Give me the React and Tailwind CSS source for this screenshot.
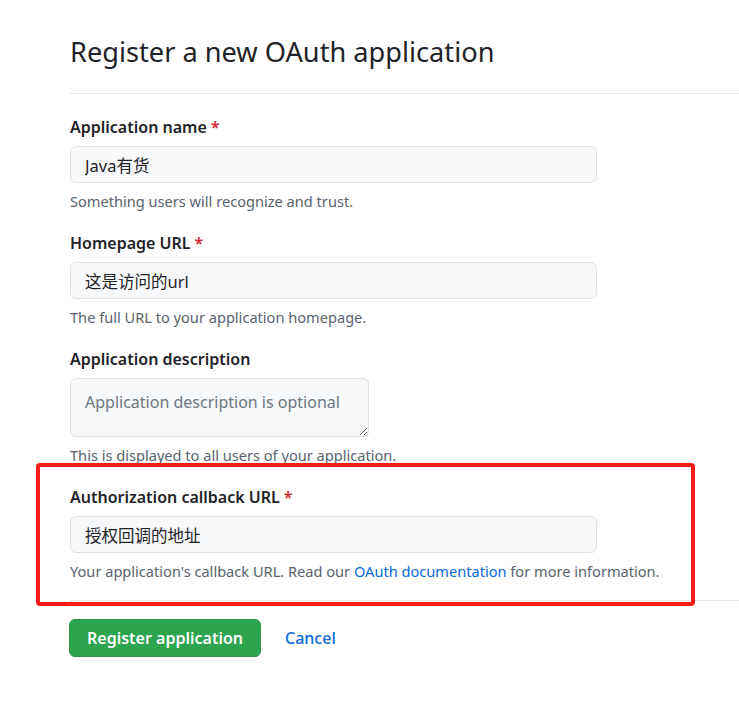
import React from "react";

const font = { fontFamily: '"Noto Sans", "Noto Sans CJK SC", sans-serif' };

function Field({ label, required, children, help }) {
  return (
    <div className="mb-[18px]">
      <div className="h-[24px] leading-[24px] text-[16px] font-semibold text-[#1f2328]">
        {label}
        {required && <span className="ml-[4px] text-[#d1242f]">*</span>}
      </div>
      <div className="mt-[7px]">{children}</div>
      <div className="mt-[6px] h-[24px] leading-[24px] text-[14.6px] text-[#59636e]">{help}</div>
    </div>
  );
}

function TextInput({ value }) {
  return (
    <input
      readOnly
      value={value}
      className="block w-[527px] h-[37px] px-[14px] rounded-[6px] border border-[#dde2e7] bg-[#f6f8fa] text-[16.5px] text-[#1f2328] outline-none"
      style={font}
    />
  );
}

export default function App() {
  return (
    <div className="relative min-h-[704px] w-full bg-white overflow-hidden" style={font}>
      <div className="pl-[70px] pt-[32px]">
        <h1 className="h-[40px] leading-[40px] text-[27.2px] font-normal text-[#1f2328]">
          Register a new OAuth application
        </h1>
        <div className="mt-[21px] mb-[21px] h-px bg-[#e3e6ea]" />

        <Field label="Application name" required help="Something users will recognize and trust.">
          <TextInput value="Java有货" />
        </Field>

        <Field label="Homepage URL" required help="The full URL to your application homepage.">
          <TextInput value="这是访问的url" />
        </Field>

        <Field label="Application description" help="This is displayed to all users of your application.">
          <textarea
            readOnly
            placeholder="Application description is optional"
            className="block w-[299px] h-[59px] px-[14px] py-[11px] leading-[24px] rounded-[6px] border border-[#dde2e7] bg-[#f6f8fa] text-[16px] text-[#1f2328] placeholder:text-[#6e7781] outline-none resize"
            style={font}
          />
        </Field>

        <div>
          <div className="h-[24px] leading-[24px] text-[16px] font-semibold text-[#1f2328]">
            Authorization callback URL
            <span className="ml-[4px] text-[#d1242f]">*</span>
          </div>
          <div className="mt-[7px]">
            <TextInput value="授权回调的地址" />
          </div>
          <div className="mt-[6px] h-[24px] leading-[24px] text-[14.6px] text-[#59636e]">
            Your application's callback URL. Read our{" "}
            <a className="text-[#0969da]">OAuth documentation</a> for more information.
          </div>
        </div>

        <div className="mt-[17px] mb-[18px] h-px bg-[#e3e6ea]" />

        <div className="flex items-center gap-[24px]">
          <button className="w-[192px] h-[38px] -ml-px rounded-[6px] bg-[#2da44e] border border-[#2a9447] text-white text-[16px] font-semibold">
            Register application
          </button>
          <a className="text-[16px] font-medium text-[#0969da]">Cancel</a>
        </div>
      </div>

      <div className="absolute left-[36px] top-[463px] w-[659px] h-[143px] border-4 border-[#f71d16] rounded-[4px] pointer-events-none" />
    </div>
  );
}
